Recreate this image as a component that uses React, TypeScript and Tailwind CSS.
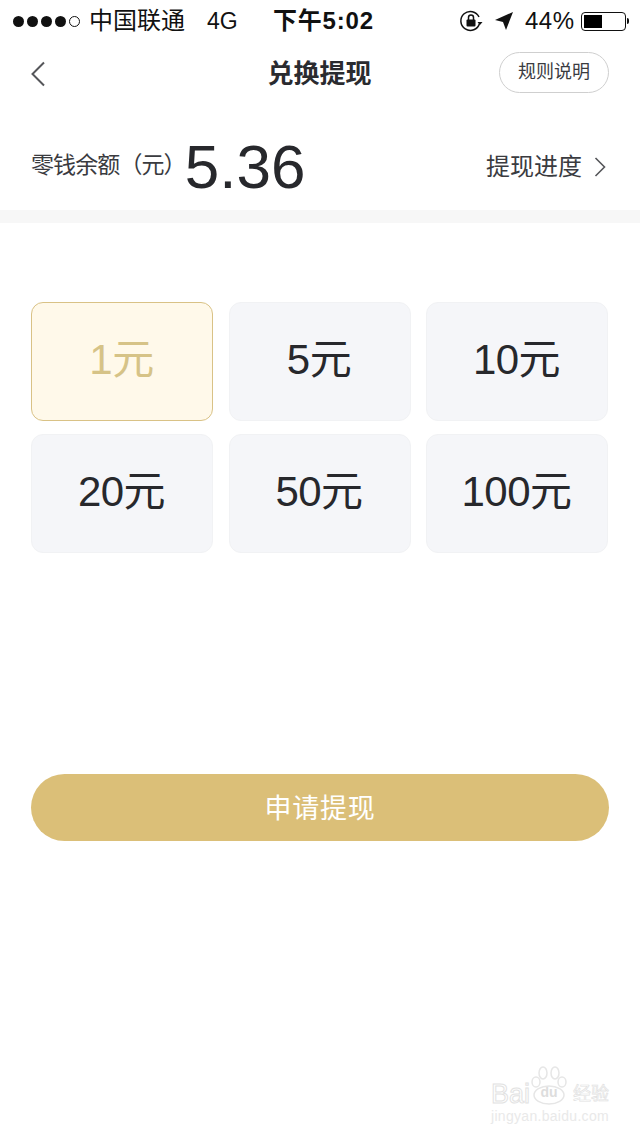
const sans = "font-['Liberation_Sans','Noto_Sans_CJK_SC',sans-serif]";

function Card({ label, active }: { label: string; active?: boolean }) {
  return (
    <div
      className={
        "h-[119px] rounded-[12px] border flex items-center justify-center text-[42px] leading-none tracking-[-0.5px] " +
        (active
          ? "bg-[#fff9ea] border-[#d9c286] text-[#d6c387]"
          : "bg-[#f5f6f9] border-[#f1f2f4] text-[#27282c]")
      }
    >
      <span className="mb-[3px] mr-[1px]">{label}</span>
    </div>
  );
}

function StatusBar() {
  return (
    <div className="h-[42px] flex items-center pl-[13px] pr-[6px] text-[24px] text-[#111] leading-none">
      <div className="flex items-center gap-[3px] w-[67px]">
        {[0, 1, 2, 3].map((i) => (
          <span key={i} className="w-[11px] h-[11px] rounded-full bg-[#111]" />
        ))}
        <span className="w-[11px] h-[11px] rounded-full border border-[#111]" />
      </div>
      <span className="ml-[9px] w-[118px]">中国联通</span>
      <span className="w-[66px] text-[23px]">4G</span>
      <span className="font-bold text-[24px] w-[186px] tracking-[0.8px]">下午5:02</span>
      <svg width="24" height="24" viewBox="0 0 24 24" className="shrink-0" fill="none">
        <path d="M20.5 14.5A9.5 9.5 0 1 1 20 8" stroke="#111" strokeWidth="1.5" />
        <path d="M18.5 13h5l-2.5 3z" fill="#111" />
        <rect x="7.5" y="10.5" width="9" height="7" rx="1" fill="#111" />
        <path d="M9.5 11V8.5a2.5 2.5 0 0 1 5 0V11" stroke="#111" strokeWidth="1.5" />
      </svg>
      <svg width="20" height="20" viewBox="0 0 20 20" className="ml-[11px] shrink-0">
        <path d="M19 1 1 9l8 2 3 8z" fill="#111" />
      </svg>
      <span className="ml-[11px] text-[24px] w-[56px] tracking-[0.5px]">44%</span>
      <div className="flex items-center">
        <div className="w-[45px] h-[19px] rounded-[4px] border border-[#111] p-[2px]">
          <div className="h-full w-[18px] bg-black" />
        </div>
        <div className="w-[2px] h-[6px] bg-[#111] rounded-r-[2px] ml-[1px]" />
      </div>
    </div>
  );
}

export default function App() {
  return (
    <div className={"relative w-[640px] h-[1136px] bg-white overflow-hidden " + sans}>
      <StatusBar />
      <div className="h-[64px] flex items-center justify-between pl-[30px] pr-[31px]">
        <svg width="16" height="26" viewBox="0 0 16 26" fill="none" className="shrink-0">
          <path d="M14 1.5 2.5 13 14 24.5" stroke="#55565a" strokeWidth="2" />
        </svg>
        <span className="text-[26px] font-bold text-[#2a2b2f] leading-none ml-[94px]">兑换提现</span>
        <div className="w-[110px] h-[41px] mb-[4px] rounded-full border border-[#cfcfcf] flex items-center justify-center text-[18px] text-[#3a3b3f]">
          规则说明
        </div>
      </div>
      <div className="h-[104px] pt-[15px] flex items-center pl-[31px] pr-[34px]">
        <span className="text-[23px] text-[#3a3b3f] leading-none tracking-[-0.9px]">零钱余额（元）</span>
        <span className="text-[62px] text-[#27282c] leading-none ml-[-1px] mb-[-3px]">5.36</span>
        <span className="ml-auto text-[24px] text-[#3a3b3f] leading-none mt-[2px]">提现进度</span>
        <svg width="12" height="20" viewBox="0 0 12 20" fill="none" className="ml-[12px] shrink-0 mt-[2px]">
          <path d="M1.5 1 10.5 10 1.5 19" stroke="#55565a" strokeWidth="1.6" />
        </svg>
      </div>
      <div className="h-[13px] bg-[#f7f7f7]" />
      <div className="grid grid-cols-3 gap-x-[15.5px] gap-y-[13px] pl-[31px] pr-[32px] mt-[79px]">
        <Card label="1元" active />
        <Card label="5元" />
        <Card label="10元" />
        <Card label="20元" />
        <Card label="50元" />
        <Card label="100元" />
      </div>
      <div className="mx-[31px] mt-[221px] h-[67px] rounded-full bg-[#dbbf78] flex items-center justify-center text-white text-[27px] tracking-[0.8px]">
        <span className="mt-[4px]">申请提现</span>
      </div>
      <div className="absolute left-[491px] top-[1066px] w-[120px] text-[#e6e6e6] leading-none">
        <div className="flex items-start h-[39px]">
          <span className="text-[27px] mt-[15px] text-transparent [-webkit-text-stroke:1px_#e2e2e2]">Bai</span>
          <div className="relative w-[36px] h-[39px] shrink-0 ml-[1px] flex items-end justify-center pb-[6px] text-[14px] font-bold text-[#dddddd]">
            du
            <svg width="36" height="39" viewBox="0 0 36 39" fill="none" stroke="#e6e6e6" strokeWidth="1.5" className="absolute left-0 top-0">
              <ellipse cx="18" cy="29" rx="15" ry="9" />
              <ellipse cx="5" cy="16" rx="4" ry="5" />
              <ellipse cx="12" cy="7" rx="4" ry="6" />
              <ellipse cx="24" cy="7" rx="4" ry="6" />
              <ellipse cx="31" cy="16" rx="4" ry="5" />
            </svg>
          </div>
          <span className="text-[18px] mt-[19px] ml-[6px] whitespace-nowrap text-transparent [-webkit-text-stroke:0.7px_#e2e2e2]">经验</span>
        </div>
        <div className="text-[14px] mt-[4px] tracking-[0.3px] whitespace-nowrap text-[#e9e9e9]">jingyan.baidu.com</div>
      </div>
    </div>
  );
}
